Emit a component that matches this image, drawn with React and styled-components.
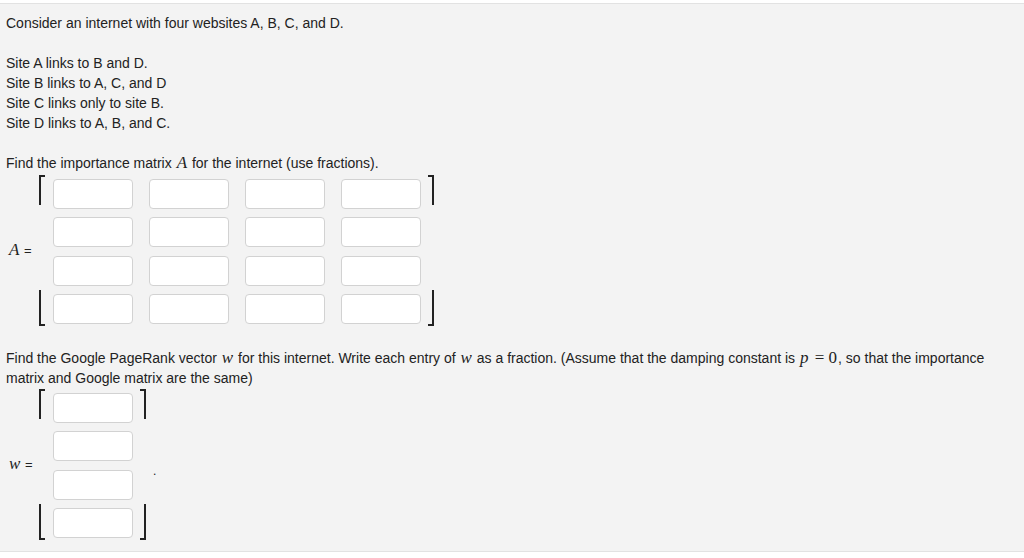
import React from "react";
import styled, { createGlobalStyle } from "styled-components";

const GlobalStyle = createGlobalStyle`
  body {
    margin: 0;
    background: #ffffff;
    font-family: "Liberation Sans", Arial, sans-serif;
  }
`;

const Panel = styled.div`
  margin-top: 3px;
  height: 538px;
  padding: 9px 6px 0 6px;
  background: #f3f3f3;
  border-top: 1px solid #e2e2e2;
  border-bottom: 1px solid #e2e2e2;
  color: #222;
  font-size: 14px;
  line-height: 20px;
`;

const P = styled.p`
  margin: 0;
  margin-top: ${(props) => props.$mt || 0}px;
  margin-bottom: ${(props) => props.$mb || 0}px;
`;

const Math = styled.span`
  font-family: "Liberation Serif", "Times New Roman", serif;
  font-style: ${(props) => (props.$upright ? "normal" : "italic")};
  font-size: 17px;
  line-height: 1;
  padding: 0 1px;
`;

const MatrixRow = styled.div`
  display: flex;
  align-items: center;
  margin-top: ${(props) => props.$mt || 0}px;
`;

const Label = styled.div`
  width: 31px;
  padding-left: 2px;
  font-size: 13px;
  white-space: nowrap;
`;

const Grid = styled.div`
  display: grid;
  grid-template-columns: 14px repeat(${(props) => props.$cols}, 96px) 12px;
  row-gap: 8.33px;
  align-items: center;
`;

const GridRow = styled.div`
  display: contents;
`;

// top piece of a bracket draws its tick above, bottom piece below
const Bracket = styled.div`
  box-sizing: border-box;
  width: 6px;
  height: ${(props) => (props.$top ? "30px" : props.$bottom ? "36px" : "0")};
  align-self: start;
  margin-top: ${(props) => (props.$top || props.$bottom ? "-4px" : "0")};
  margin-bottom: ${(props) => (props.$top ? "4px" : props.$bottom ? "-2px" : "0")};
  margin-left: ${(props) => (props.$right ? "-9px" : "0")};
  border-left: ${(props) => (props.$right ? "none" : "2px solid #222")};
  border-right: ${(props) => (props.$right ? "2px solid #222" : "none")};
  border-top: ${(props) => (props.$top ? "2px solid #222" : "none")};
  border-bottom: ${(props) => (props.$bottom ? "2px solid #222" : "none")};
  visibility: ${(props) => (props.$blank ? "hidden" : "visible")};
`;

const Input = styled.input`
  box-sizing: border-box;
  width: 80px;
  height: 30px;
  margin: 0;
  padding: 0 6px;
  background: #ffffff;
  border: 1px solid #d2d2d2;
  border-radius: 4px;
  outline: none;
  font-family: inherit;
  font-size: 13px;
`;

const Dot = styled.span`
  margin-left: -8px;
  margin-top: 12px;
  font-size: 12px;
`;

function Matrix({ rows, cols }) {
  return (
    <Grid $cols={cols}>
      {Array.from({ length: rows }).map((_, r) => {
        const top = r === 0;
        const bottom = r === rows - 1;
        const blank = !top && !bottom;
        return (
          <GridRow key={r}>
            <Bracket $top={top} $bottom={bottom} $blank={blank} />
            {Array.from({ length: cols }).map((_, c) => (
              <Input key={c} type="text" />
            ))}
            <Bracket $right $top={top} $bottom={bottom} $blank={blank} />
          </GridRow>
        );
      })}
    </Grid>
  );
}

export default function App() {
  return (
    <>
      <GlobalStyle />
      <Panel>
        <P $mb={20}>Consider an internet with four websites A, B, C, and D.</P>
        <P>Site A links to B and D.</P>
        <P>Site B links to A, C, and D</P>
        <P>Site C links only to site B.</P>
        <P $mb={20}>Site D links to A, B, and C.</P>
        <P>
          Find the importance matrix <Math>A</Math> for the internet (use
          fractions).
        </P>
        <MatrixRow $mt={6}>
          <Label>
            <Math>A</Math> =
          </Label>
          <Matrix rows={4} cols={4} />
        </MatrixRow>
        <P $mt={24}>
          Find the Google PageRank vector <Math>w</Math> for this internet.
          Write each entry of <Math>w</Math> as a fraction. (Assume that the
          damping constant is <Math>p</Math>
          <Math $upright> = 0</Math>, so that the importance matrix and Google
          matrix are the same)
        </P>
        <MatrixRow $mt={5}>
          <Label>
            <Math>w</Math> =
          </Label>
          <Matrix rows={4} cols={1} />
          <Dot>.</Dot>
        </MatrixRow>
      </Panel>
    </>
  );
}
